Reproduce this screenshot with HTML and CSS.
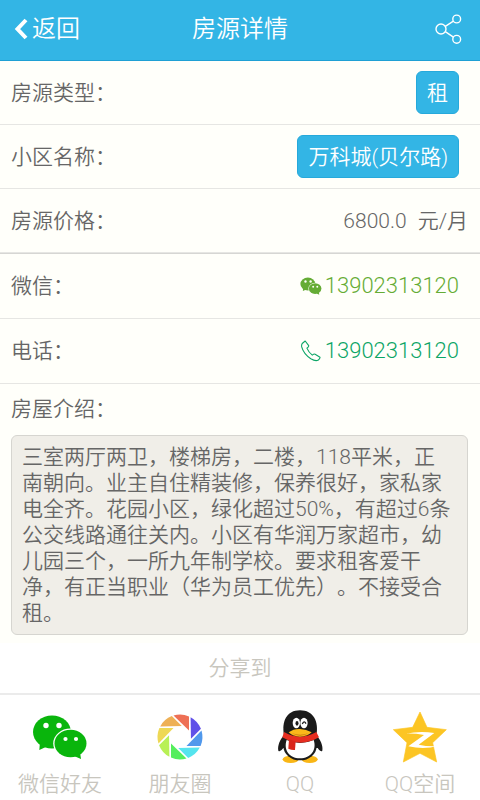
FILE: index.html
```
<!DOCTYPE html>
<html lang="zh-CN">
<head>
    <meta charset="UTF-8">
    <meta name="viewport" content="width=device-width, initial-scale=1.0">
    <title>房源详情</title>
    <link rel="stylesheet" href="styles.css">
</head>
<body>
    <header class="header">
        <a class="back" href="#">
            <svg width="14" height="22" viewBox="0 0 14 22"><path d="M12 2L3.500 11L12 20" fill="none" stroke="currentColor" stroke-width="4"/></svg>
            <span>返回</span>
        </a>
        <h1>房源详情</h1>
        <button class="share-btn" type="button" aria-label="分享">
            <svg width="28" height="30" viewBox="0 0 28 30" fill="none" stroke="currentColor" stroke-width="1.4">
                <circle cx="7" cy="15" r="5"/>
                <circle cx="22.700" cy="5" r="3.900"/>
                <circle cx="22.700" cy="25.300" r="3.900"/>
                <path d="M11.300 12.300L19.400 7.100M11.300 17.700L19.400 23.200"/>
            </svg>
        </button>
    </header>

    <main>
        <!-- House info -->
        <section class="group">
            <div class="row">
                <span>房源类型：</span>
                <button class="tag" type="button">租</button>
            </div>
            <div class="row">
                <span>小区名称：</span>
                <button class="tag" type="button">万科城(贝尔路)</button>
            </div>
            <div class="row">
                <span>房源价格：</span>
                <span class="price"><span>6800.0</span><span>元/月</span></span>
            </div>
        </section>

        <!-- Contact -->
        <section class="contacts">
            <div class="row">
                <span>微信：</span>
                <a class="contact wechat" href="#">
                    <svg width="22" height="22" viewBox="0 -4 56 56">
                        <path d="M8 29L7.300 37L16 33Z" fill="currentColor"/>
                        <ellipse cx="20" cy="19" rx="19" ry="16.500" fill="currentColor"/>
                        <ellipse cx="38.500" cy="30.500" rx="17.300" ry="15" fill="#fffffa"/>
                        <ellipse cx="38.500" cy="30.500" rx="16" ry="13.700" fill="currentColor"/>
                        <path d="M42 43L49 46L48 39Z" fill="currentColor"/>
                        <g fill="#fffffa"><circle cx="14" cy="12.500" r="3"/><circle cx="27" cy="12.500" r="3"/><circle cx="33.500" cy="26" r="2.500"/><circle cx="44" cy="26" r="2.500"/></g>
                    </svg>
                    <span>13902313120</span>
                </a>
            </div>
            <div class="row">
                <span>电话：</span>
                <a class="contact phone" href="tel:13902313120">
                    <svg width="22" height="22" viewBox="0 0 22 22">
                        <path d="M2.500 3.200L5.200 1L8.700 5.700Q9 6.500 6.900 8.100Q8.600 12.200 12.300 15.100Q14.100 13.700 15.100 14.200L20 17.200Q20.300 18.200 18 20.300Q15.300 21.500 10.800 18.800Q3.500 13.800 1.700 6.900Q1.300 4.500 2.500 3.200Z" fill="none" stroke="currentColor" stroke-width="1.100" stroke-linejoin="round"/>
                    </svg>
                    <span>13902313120</span>
                </a>
            </div>
        </section>

        <!-- Introduction -->
        <section class="intro">
            <h2>房屋介绍：</h2>
            <p>三室两厅两卫，楼梯房，二楼，118平米，正南朝向。业主自住精装修，保养很好，家私家电全齐。花园小区，绿化超过50%，有超过6条公交线路通往关内。小区有华润万家超市，幼儿园三个，一所九年制学校。要求租客爱干净，有正当职业（华为员工优先）。不接受合租。</p>
        </section>
    </main>

    <!-- Share bar -->
    <footer class="share">
        <h2>分享到</h2>
        <div class="share-list">
            <button type="button">
                <svg width="56" height="56" viewBox="0 -4 56 56">
                    <path d="M8 29L7.300 37L16 33Z" fill="#09b50c"/>
                    <ellipse cx="20" cy="19" rx="19" ry="16.500" fill="#09b50c"/>
                    <ellipse cx="38.500" cy="30.500" rx="17.300" ry="15" fill="#fff"/>
                    <ellipse cx="38.500" cy="30.500" rx="16" ry="13.700" fill="#09b50c"/>
                    <path d="M42 43L49 46L48 39Z" fill="#09b50c"/>
                    <g fill="#fff"><circle cx="14" cy="12.500" r="2.700"/><circle cx="27" cy="12.500" r="2.700"/><circle cx="33.500" cy="26" r="2.100"/><circle cx="44" cy="26" r="2.100"/></g>
                </svg>
                <span>微信好友</span>
            </button>
            <button type="button">
                <svg width="56" height="56" viewBox="-28 -28 56 56">
                    <defs><path id="blade" d="M-6.500 -21.500A22.500 22.500 0 0 1 9 -20.600V-6.500Z"/></defs>
                    <use href="#blade" fill="#ee7055"/>
                    <use href="#blade" fill="#6050e8" transform="rotate(45)"/>
                    <use href="#blade" fill="#5098ec" transform="rotate(90)"/>
                    <use href="#blade" fill="#55e4ee" transform="rotate(135)"/>
                    <use href="#blade" fill="#55ee5c" transform="rotate(180)"/>
                    <use href="#blade" fill="#b8f055" transform="rotate(225)"/>
                    <use href="#blade" fill="#eed855" transform="rotate(270)"/>
                    <use href="#blade" fill="#eeb055" transform="rotate(315)"/>
                </svg>
                <span>朋友圈</span>
            </button>
            <button type="button">
                <svg width="56" height="56" viewBox="36 27 168 168">
                    <ellipse cx="92" cy="178" rx="24" ry="11" fill="#f9b616"/>
                    <ellipse cx="149" cy="178" rx="24" ry="11" fill="#f9b616"/>
                    <path d="M73 105C60 118 52 137 55 152Q60 158 70 144L173 144Q181 158 187 152C190 137 181 118 168 105Z" fill="#1b1b1b"/>
                    <ellipse cx="120" cy="138" rx="50" ry="43" fill="#1b1b1b"/>
                    <path d="M72 106C64 64 80 31 120 31S177 64 169 106Z" fill="#1b1b1b"/>
                    <path d="M80 120Q120 138 161 120C171 149 153 175 120 175S70 149 80 120Z" fill="#fff"/>
                    <path d="M72 96Q120 124 169 96L177 112Q122 144 67 112Z" fill="#e62d20"/>
                    <path d="M87 118L107 124L105 150Q95 151 85 146Z" fill="#d9251a"/>
                    <ellipse cx="109" cy="69" rx="11" ry="16" fill="#fff"/>
                    <ellipse cx="132" cy="69" rx="11" ry="16" fill="#fff"/>
                    <ellipse cx="111" cy="70" rx="4.500" ry="7" fill="#1b1b1b"/>
                    <path d="M127 72Q132 60 138 71" fill="none" stroke="#1b1b1b" stroke-width="4"/>
                    <path d="M86 97Q101 86 120 87T155 97Q140 110 120 110T86 97Z" fill="#fbb81a"/>
                    <path d="M96 100Q120 108 145 100Q120 114 96 100Z" fill="#c97c10"/>
                </svg>
                <span>QQ</span>
            </button>
            <button type="button">
                <svg width="56" height="56" viewBox="456 327 168 168">
                    <path d="M540 336L561 382L619 389L578 428L590 486L540 460L490 486L501 428L460 389L518 382Z" fill="#fcc524" stroke="#fcc524" stroke-width="2" stroke-linejoin="round"/>
                    <path d="M497 401Q540 392 583 399L536 434Q565 440 593 438Q552 450 505 439L552 405Q525 400 497 401Z" fill="#fff"/>
                </svg>
                <span>QQ空间</span>
            </button>
        </div>
    </footer>
</body>
</html>
```
FILE: styles.css
```
* {
    box-sizing: border-box;
}

body {
    margin: 0;
    min-height: 100vh;
    display: flex;
    flex-direction: column;
    background-color: #fffffa;
    color: #666;
    font-family: Roboto, "Noto Sans CJK SC", sans-serif;
    font-size: 21px;
    font-weight: 350;
    line-height: 26px;
    text-spacing-trim: space-all;
}

h1,
h2,
p {
    margin: 0;
    font-size: 21px;
    font-weight: 350;
}

a {
    text-decoration: none;
}

button {
    padding: 0;
    border: none;
    background: none;
    color: inherit;
    font: inherit;
    cursor: pointer;
}

svg {
    display: block;
}

/* Header */
.header {
    display: grid;
    grid-template-columns: 1fr auto 1fr;
    align-items: center;
    height: 61px;
    padding: 0 14px 2px;
    background-color: #33b5e5;
    border-bottom: 1px solid #1fa0d4;
    color: #fff;
}

.header h1,
.back {
    font-size: 24px;
}

.back {
    display: flex;
    align-items: center;
    gap: 4px;
    color: #fff;
}

.share-btn {
    justify-self: end;
    margin-right: 4px;
}

/* Rows */
.row {
    display: flex;
    justify-content: space-between;
    align-items: center;
    min-height: 64px;
    padding: 0 12px 0 11px;
    border-bottom: 1px solid #e6e6e3;
}

.group {
    border-bottom: 1px solid #d6d6d3;
}

.contacts .row {
    min-height: 65px;
}

.tag {
    height: 43px;
    margin-right: 9px;
    padding: 0 10px;
    border: 1px solid #26a9db;
    border-radius: 6px;
    background-color: #33b5e5;
    color: #fff;
}

.price {
    display: flex;
    gap: 11px;
}

.contact {
    display: flex;
    align-items: center;
    gap: 3px;
    margin-right: 9px;
    font-size: 22px;
}

.wechat {
    color: #65ac35;
}

.phone {
    color: #0ca566;
}

/* Introduction */
.intro {
    padding: 12px 12px 8px 11px;
}

.intro p {
    margin-top: 13px;
    padding: 8px 14px 8px 10px;
    border: 1px solid #d6d5d0;
    border-radius: 6px;
    background-color: #f0eee8;
}

/* Share */
.share {
    flex: 1;
    background-color: #fff;
    color: #c8c6be;
    text-align: center;
}

.share h2 {
    padding: 12px 0;
    border-bottom: 2px solid #ebebeb;
}

.share-list {
    display: grid;
    grid-template-columns: repeat(4, 1fr);
    padding-top: 14px;
}

.share-list button {
    display: flex;
    flex-direction: column;
    align-items: center;
    gap: 6px;
}
```
